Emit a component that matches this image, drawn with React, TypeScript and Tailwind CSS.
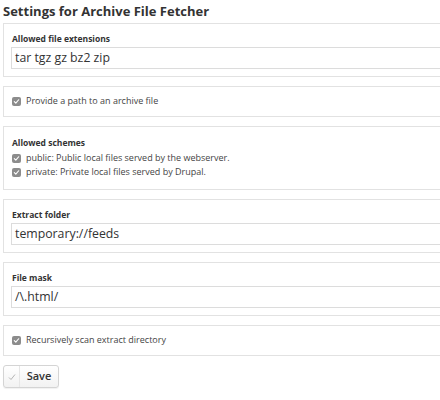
import React from "react";

const font = { fontFamily: '"Open Sans", "Liberation Sans", sans-serif' };

function Check() {
    return (
        <span className="inline-flex w-[9px] h-[9px] rounded-[2px] bg-[#8c8c8c] items-center justify-center shrink-0">
            <svg width="7" height="7" viewBox="0 0 8 8" fill="none">
                <path d="M1.5 4.2 L3.2 5.8 L6.5 2" stroke="white" strokeWidth="1.3" strokeLinecap="round" strokeLinejoin="round" />
            </svg>
        </span>
    );
}

function CheckRow({ label }: { label: string }) {
    return (
        <div className="flex items-center gap-[5px] h-[14px] text-[9px] text-[#444]">
            <Check />
            <span>{label}</span>
        </div>
    );
}

function Panel({ children, className = "" }: { children: React.ReactNode; className?: string }) {
    return (
        <div className={`w-[480px] border border-[#e2e2e2] px-[8px] ${className}`}>{children}</div>
    );
}

function Label({ text }: { text: string }) {
    return <div className="text-[8.5px] font-bold leading-[12px] text-[#333]">{text}</div>;
}

function Input({ value }: { value: string }) {
    return (
        <div className="mt-[2px] -ml-px h-[22px] w-[470px] border border-[#dcdcdc] px-[3px] flex items-center text-[12.3px] text-[#333]">
            {value}
        </div>
    );
}

export default function App() {
    return (
        <div className="w-[440px] h-[400px] overflow-hidden bg-white px-[3px]" style={font}>
            <h1 className="h-[23px] text-[13px] font-bold leading-[22px] text-[#333]">
                Settings for Archive File Fetcher
            </h1>
            <div className="flex flex-col gap-[9px]">
                <Panel className="pt-[9px] pb-[7px]">
                    <Label text="Allowed file extensions" />
                    <Input value="tar tgz gz bz2 zip" />
                </Panel>
                <Panel className="pt-[7px] pb-[8px]">
                    <CheckRow label="Provide a path to an archive file" />
                </Panel>
                <Panel className="pt-[10px] pb-[10px]">
                    <Label text="Allowed schemes" />
                    <div className="mt-[2px]">
                        <CheckRow label="public: Public local files served by the webserver." />
                        <CheckRow label="private: Private local files served by Drupal." />
                    </div>
                </Panel>
                <Panel className="pt-[9px] pb-[7px]">
                    <Label text="Extract folder" />
                    <Input value="temporary://feeds" />
                </Panel>
                <Panel className="pt-[9px] pb-[7px]">
                    <Label text="File mask" />
                    <Input value="/\.html/" />
                </Panel>
                <Panel className="pt-[7px] pb-[8px]">
                    <CheckRow label="Recursively scan extract directory" />
                </Panel>
            </div>
            <button className="mt-[9px] flex items-center h-[23px] w-[56px] rounded-[3px] border border-[#d4d4d4] bg-gradient-to-b from-white to-[#f2f2f2] shadow-[0_1px_1px_rgba(0,0,0,0.06)]">
                <span className="w-[16px] h-full flex items-center justify-center border-r border-[#e6e6e6]">
                    <svg width="8" height="8" viewBox="0 0 8 8" fill="none">
                        <path d="M1 4.5 L3 6.5 L7 1.5" stroke="#b5b5b5" strokeWidth="1" />
                    </svg>
                </span>
                <span className="flex-1 text-center text-[11px] font-semibold text-[#333]">Save</span>
            </button>
        </div>
    );
}
